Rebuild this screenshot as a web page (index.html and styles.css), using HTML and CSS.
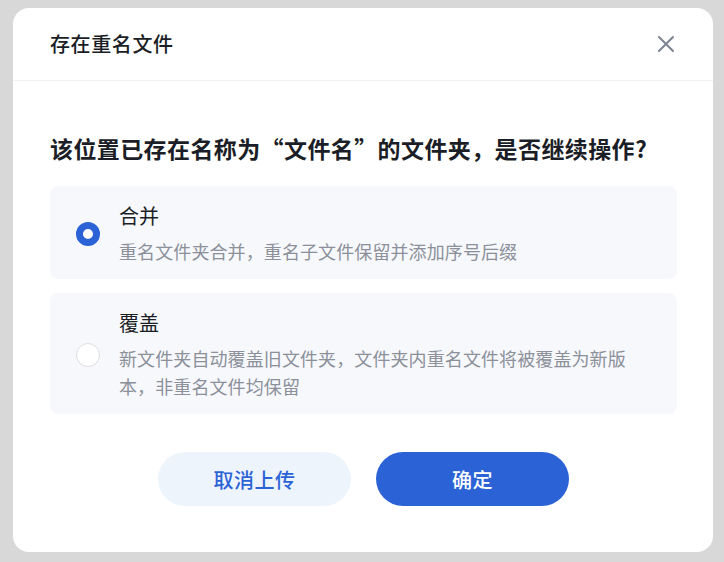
FILE: index.html
```html
<!DOCTYPE html>
<html lang="zh-CN">
<head>
<meta charset="utf-8">
<title>存在重名文件</title>
<link rel="stylesheet" href="styles.css">
</head>
<body>
<div class="dialog">
  <div class="dialog-header">
    <div class="dialog-title">存在重名文件</div>
    <button class="close-btn" aria-label="关闭">
      <svg width="18" height="18" viewBox="0 0 18 18"><path d="M2 2L16 16M16 2L2 16" stroke="#7d8391" stroke-width="2" stroke-linecap="round" fill="none"/></svg>
    </button>
  </div>
  <div class="dialog-body">
    <div class="question">该位置已存在名称为“文件名”的文件夹，是否继续操作?</div>
    <div class="options">
      <div class="option">
        <span class="radio radio-checked"></span>
        <div class="option-text">
          <div class="option-title">合并</div>
          <div class="option-desc">重名文件夹合并，重名子文件保留并添加序号后缀</div>
        </div>
      </div>
      <div class="option">
        <span class="radio"></span>
        <div class="option-text">
          <div class="option-title">覆盖</div>
          <div class="option-desc">新文件夹自动覆盖旧文件夹，文件夹内重名文件将被覆盖为新版本，非重名文件均保留</div>
        </div>
      </div>
    </div>
    <div class="actions">
      <button class="btn btn-cancel">取消上传</button>
      <button class="btn btn-primary">确定</button>
    </div>
  </div>
</div>
</body>
</html>
```
FILE: styles.css
```css
* { box-sizing: border-box; }
html, body { margin: 0; padding: 0; }
body {
  background: #d8d8d8;
  font-family: "Noto Sans CJK SC", "Noto Sans", sans-serif;
  padding: 8px 0 0 13px;
  width: 724px;
  height: 562px;
  overflow: hidden;
}
.dialog {
  width: 700px;
  height: 544px;
  background: #ffffff;
  border-radius: 16px;
  display: flex;
  flex-direction: column;
}
.dialog-header {
  height: 73px;
  border-bottom: 1px solid #f1f2f5;
  display: flex;
  align-items: center;
  justify-content: space-between;
  padding: 0 38px 0 37px;
}
.dialog-title {
  font-size: 20px;
  font-weight: 500;
  color: #1b1e26;
  line-height: 28px;
  letter-spacing: 0.6px;
}
.close-btn {
  border: 0;
  background: none;
  padding: 0;
  width: 18px;
  height: 18px;
  display: flex;
}
.dialog-body {
  padding: 52px 36px 0 37px;
  display: flex;
  flex-direction: column;
}
.question {
  font-size: 23px;
  font-weight: 600;
  color: #1b1e26;
  line-height: 30px;
  letter-spacing: 0.4px;
  margin-bottom: 23px;
}
.options {
  display: flex;
  flex-direction: column;
  gap: 14px;
}
.option {
  background: #f7f8fc;
  border-radius: 8px;
  display: flex;
  align-items: center;
  padding: 17px 40px 14px 26px;
  gap: 19px;
}
.radio {
  flex: none;
  width: 24px;
  height: 24px;
  border-radius: 50%;
  border: 1.5px solid #dcdee3;
  background: #ffffff;
}
.radio-checked {
  border: 7.5px solid #2b63d6;
  background: #ffffff;
}
.option-text { flex: 1; }
.option-title {
  font-size: 20px;
  line-height: 26px;
  color: #1b1e26;
}
.option-desc {
  margin-top: 8px;
  font-size: 18px;
  line-height: 28px;
  letter-spacing: 0.1px;
  color: #8b909a;
}
.actions {
  margin-top: 38px;
  display: flex;
  justify-content: center;
  gap: 25px;
}
.btn {
  width: 193px;
  height: 54px;
  border-radius: 27px;
  border: 0;
  font-family: "Noto Sans CJK SC", "Noto Sans", sans-serif;
  font-size: 20px;
  font-weight: 500;
  letter-spacing: 0.5px;
}
.btn-cancel {
  background: #eef4fb;
  color: #2b63d6;
}
.btn-primary {
  background: #2b63d6;
  color: #ffffff;
}
```
